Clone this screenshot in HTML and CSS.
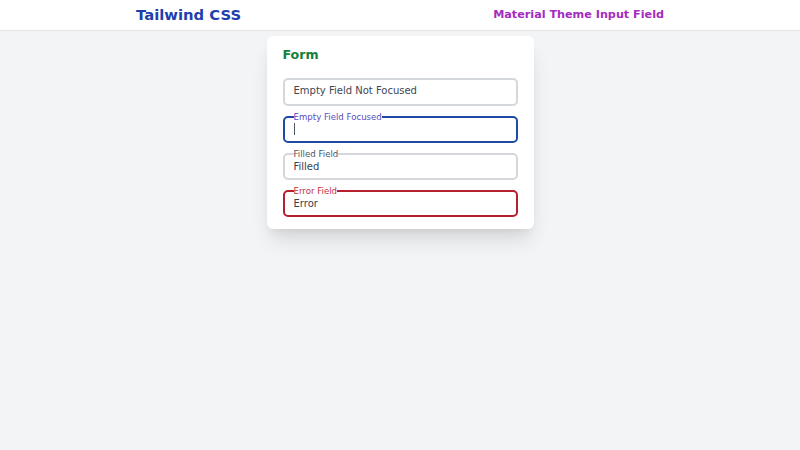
FILE: index.html
```html
<!DOCTYPE html>
<html lang="en">
<head>
<meta charset="utf-8">
<title>Material Theme Input Field</title>
<link rel="stylesheet" href="styles.css">
</head>
<body>
<header class="topbar">
  <div class="topbar-inner">
    <span class="brand">Tailwind CSS</span>
    <span class="page-title">Material Theme Input Field</span>
  </div>
</header>
<main class="page">
  <section class="card">
    <h2 class="card-title">Form</h2>
    <div class="fields">
      <fieldset class="field field-plain">
        <div class="field-value muted">Empty Field Not Focused</div>
      </fieldset>
      <fieldset class="field field-focused">
        <legend class="field-label">Empty Field Focused</legend>
        <div class="field-value"><span class="caret"></span></div>
      </fieldset>
      <fieldset class="field field-filled">
        <legend class="field-label">Filled Field</legend>
        <div class="field-value">Filled</div>
      </fieldset>
      <fieldset class="field field-error">
        <legend class="field-label">Error Field</legend>
        <div class="field-value">Error</div>
      </fieldset>
    </div>
  </section>
</main>
</body>
</html>
```

FILE: styles.css
```css
* { box-sizing: border-box; }

html, body {
  margin: 0;
  padding: 0;
}

body {
  background: #f3f4f6;
  font-family: "DejaVu Sans", "Noto Sans", sans-serif;
  color: #374151;
  min-height: 450px;
}

.topbar {
  background: #ffffff;
  border-bottom: 1px solid #e3e5e9;
}

.topbar-inner {
  max-width: 528px;
  margin: 0 auto;
  height: 30px;
  padding-bottom: 1px;
  display: flex;
  align-items: center;
  justify-content: space-between;
}

.brand {
  font-size: 14.8px;
  font-weight: bold;
  color: #1e40af;
}

.page-title {
  font-size: 11.2px;
  font-weight: bold;
  color: #a42cc0;
}

.page {
  display: flex;
  justify-content: center;
  padding-top: 5px;
}

.card {
  width: 267px;
  background: #ffffff;
  border-radius: 6px;
  padding: 10px 16px 12px;
  box-shadow: 0 14px 20px -4px rgba(0, 0, 0, 0.12), 0 5px 8px -4px rgba(0, 0, 0, 0.08);
}

.card-title {
  margin: 0;
  font-size: 12.6px;
  line-height: 17.6px;
  font-weight: bold;
  color: #15803d;
}

.fields {
  margin-top: 14.4px;
  display: flex;
  flex-direction: column;
  gap: 6px;
}

.field {
  margin: 0;
  min-width: 0;
  border: 2px solid #d4d7dc;
  border-radius: 5px;
  padding: 1.5px 9px 3.5px;
}

.field-plain {
  padding-top: 4px;
  padding-bottom: 6px;
}

.field-label {
  padding: 0;
  font-size: 8.6px;
  line-height: 10px;
  color: #4b5563;
}

.field-value {
  font-size: 10px;
  line-height: 14px;
  height: 14px;
  color: #374151;
}

.muted {
  color: #3f4653;
}

.field-focused {
  border-color: #1f4aa3;
}

.field-focused .field-label {
  color: #5a4bc2;
}

.caret {
  display: inline-block;
  width: 0;
  height: 12px;
  margin-top: 0;
  border-left: 1px solid #4b5563;
  vertical-align: top;
}

.field-error {
  border-color: #b7202f;
}

.field-error .field-label {
  color: #c2313f;
}
```
